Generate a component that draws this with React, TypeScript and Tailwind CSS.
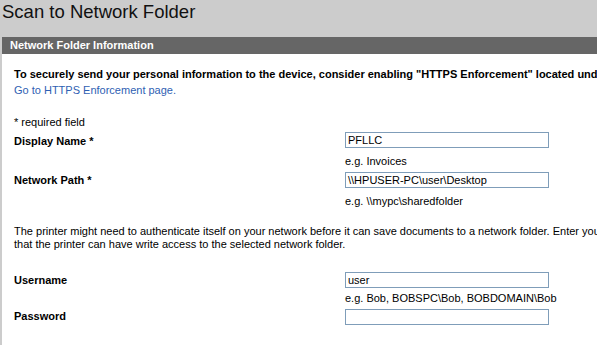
import React from "react";

const font = { fontFamily: '"Liberation Sans", Arial, sans-serif' };

function Row({
  label,
  value,
  labelOffset,
  mt,
}: {
  label: string;
  value: string;
  labelOffset: string;
  mt: string;
}) {
  return (
    <div className={`flex items-start ${mt}`}>
      <div className={`w-[331px] shrink-0 text-[11px] leading-[13px] font-bold text-[#000] ${labelOffset}`}>
        {label}
      </div>
      <div className="w-[204px] h-[16px] border border-[#7f9db9] bg-white text-[11px] leading-[14px] pl-[2px] text-black whitespace-nowrap overflow-hidden">
        {value}
      </div>
    </div>
  );
}

export default function App() {
  return (
    <div className="w-[597px] h-[345px] overflow-hidden bg-white" style={font}>
      <div className="w-[900px]">
        <div className="h-[37px] bg-[#cccccc] pl-[2px] pt-[1px] text-[18.5px] leading-[22px] text-[#111]">
          Scan to Network Folder
        </div>
        <div className="flex">
          <div className="w-[2px] shrink-0 bg-[#cccccc] h-[320px]" />
          <div className="flex-1">
            <div className="h-[17px] bg-[#666666] pl-[8px] text-white text-[11px] font-bold leading-[17px]">
              Network Folder Information
            </div>
            <div className="flex flex-col pl-[12px]">
              <div className="mt-[14px] text-[11px] leading-[13px] font-bold text-black whitespace-nowrap">
                To securely send your personal information to the device, consider enabling "HTTPS Enforcement" located under the Security tab.
              </div>
              <div className="mt-[3px] text-[11px] leading-[13px] text-[#2f5fb3] whitespace-nowrap">
                Go to HTTPS Enforcement page.
              </div>
              <div className="mt-[19px] text-[11px] leading-[13px] text-black">* required field</div>
              <Row label="Display Name *" value="PFLLC" labelOffset="mt-[3px]" mt="mt-[3px]" />
              <div className="mt-[7px] pl-[331px] text-[11px] leading-[13px] text-black">e.g. Invoices</div>
              <Row
                label="Network Path *"
                value="\\HPUSER-PC\user\Desktop"
                labelOffset="mt-[2px]"
                mt="mt-[4px]"
              />
              <div className="mt-[7px] pl-[331px] text-[11px] leading-[13px] text-black">
                e.g. \\mypc\sharedfolder
              </div>
              <div className="mt-[17px] text-[11px] leading-[13px] text-black whitespace-nowrap">
                The printer might need to authenticate itself on your network before it can save documents to a network folder. Enter your credentials so
                <br />
                that the printer can have write access to the selected network folder.
              </div>
              <Row label="Username" value="user" labelOffset="mt-[2px]" mt="mt-[21px]" />
              <div className="mt-[4px] pl-[331px] text-[11px] leading-[13px] text-black">
                e.g. Bob, BOBSPC\Bob, BOBDOMAIN\Bob
              </div>
              <Row label="Password" value="" labelOffset="mt-[1px]" mt="mt-[4px]" />
            </div>
          </div>
        </div>
      </div>
    </div>
  );
}
